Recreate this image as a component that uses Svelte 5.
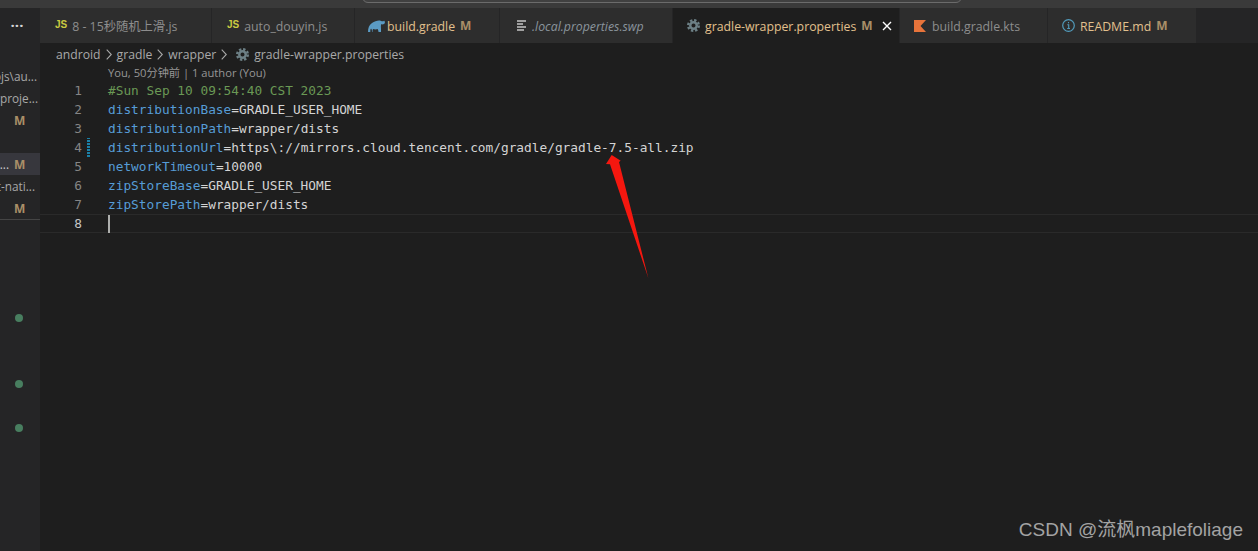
<script>
  const tabs = [
    { name: "8 - 15秒随机上滑.js", icon: "js", width: 172 },
    { name: "auto_douyin.js", icon: "js", width: 143 },
    { name: "build.gradle", icon: "gradle", width: 145, mod: true },
    { name: ".local.properties.swp", icon: "lines", width: 173, italic: true },
    { name: "gradle-wrapper.properties", icon: "gear", width: 227, mod: true, active: true },
    { name: "build.gradle.kts", icon: "kotlin", width: 148 },
    { name: "README.md", icon: "info", width: 149, mod: true },
  ];

  const lines = [
    { comment: "#Sun Sep 10 09:54:40 CST 2023" },
    { key: "distributionBase", value: "GRADLE_USER_HOME" },
    { key: "distributionPath", value: "wrapper/dists" },
    { key: "distributionUrl", value: "https\\://mirrors.cloud.tencent.com/gradle/gradle-7.5-all.zip", changed: true },
    { key: "networkTimeout", value: "10000" },
    { key: "zipStoreBase", value: "GRADLE_USER_HOME" },
    { key: "zipStorePath", value: "wrapper/dists" },
    { current: true },
  ];

  const files = [
    { text: "ojs\\au...", shift: 13 },
    { text: "yproje...", shift: 14 },
    { mod: true },
    {},
    { text: "...", mod: true, selected: true },
    { text: "t-nati...", shift: 11 },
    { mod: true, last: true },
  ];
</script>

{#snippet gear(size, color)}
  <svg class="icon" width={size} height={size} viewBox="0 0 16 16">
    <circle cx="8" cy="8" r="4" fill="none" stroke={color} stroke-width="3" />
    <circle cx="8" cy="8" r="6.500" fill="none" stroke={color} stroke-width="3" stroke-dasharray="2.900 2.200" />
  </svg>
{/snippet}

{#snippet chevron()}
  <svg class="icon" width="6" height="11" viewBox="0 0 6 11">
    <path d="M.7.7l4.600 4.800-4.600 4.800" fill="none" stroke="#a9a9a9" stroke-width="1.100" />
  </svg>
{/snippet}

<div class="window">
  <div class="titlebar"><div class="search"></div></div>
  <div class="main">
    <aside class="sidebar">
      <div class="more">···</div>
      <div class="rows">
        {#each files as f}
          <div class="row" class:selected={f.selected} class:last={f.last}>
            {#if f.text}<span class="row-text" style="margin-right: {-(f.shift ?? 0)}px">{f.text}</span>{/if}
            {#if f.mod}<span class="row-mod">M</span>{/if}
          </div>
        {/each}
      </div>
      <div class="dots">
        <span class="dot"></span>
        <span class="dot gap1"></span>
        <span class="dot gap2"></span>
      </div>
    </aside>

    <section class="content">
      <div class="tabs">
        {#each tabs as t}
          <div class="tab" class:active={t.active} class:dim={!t.mod} style="width: {t.width}px">
            {#if t.icon === "js"}
              <span class="js">JS</span>
            {:else if t.icon === "gradle"}
              <svg class="icon elephant" width="19" height="14" viewBox="0 0 19 14">
                <path d="M1 13c0-4 1-7 4-9 3-2 7-3 9-2 2 .6 3 .3 3-.5 1 1 1.500 2.500 0 3.500-1 .5-2 .5-2.500 0-1 1-.5 3-.5 5 0 1 0 2 0 3h-2.500c0-1-.5-2.500-1-3-1 .5-3 .5-4.500 0-.5 1-.5 2-.5 3H5c0-1 0-2-.5-3C3.500 9 3.300 11 3.300 13z" fill="#5b9bc4" />
              </svg>
            {:else if t.icon === "lines"}
              <svg class="icon doc" width="10" height="11" viewBox="0 0 10 11">
                <path d="M0 1h9M0 4h6M0 7h9M0 10h7" stroke="#c5c5c5" stroke-width="1.500" />
              </svg>
            {:else if t.icon === "gear"}
              {@render gear(13, "#6d8086")}
            {:else if t.icon === "kotlin"}
              <svg class="icon kotlin" width="12" height="12" viewBox="0 0 12 12">
                <path d="M0 0h12L6.500 6 12 12H0z" fill="#e8743b" />
              </svg>
            {:else if t.icon === "info"}
              <svg class="icon" width="13" height="13" viewBox="0 0 13 13">
                <circle cx="6.500" cy="6.500" r="5.800" fill="none" stroke="#519aba" stroke-width="1.200" />
                <path d="M6.500 3v1.300M5.300 5.800h1.400v3.500M5.200 9.500h2.800" fill="none" stroke="#519aba" stroke-width="1.100" />
              </svg>
            {/if}
            <span class="tab-name" class:italic={t.italic}>{t.name}</span>
            {#if t.mod}<span class="tab-mod">M</span>{/if}
            {#if t.active}
              <svg class="close" width="10" height="10" viewBox="0 0 10 10">
                <path d="M1 1l8 8M9 1l-8 8" stroke="#fff" stroke-width="1.400" />
              </svg>
            {/if}
          </div>
        {/each}
        <div class="tabs-rest"></div>
      </div>

      <div class="crumbs">
        <span>android</span>{@render chevron()}
        <span>gradle</span>{@render chevron()}
        <span>wrapper</span>{@render chevron()}
        <span class="crumb-gear">{@render gear(13, "#6d8086")}</span>
        <span>gradle-wrapper.properties</span>
      </div>

      <div class="lens">You, 50分钟前 | 1 author (You)</div>

      <div class="code">
        {#each lines as line, i}
          <div class="line" class:current={line.current}>
            <span class="num">{i + 1}</span>
            <span class="gutter" class:changed={line.changed}></span>
            <span class="src">
              {#if line.comment}
                <span class="comment">{line.comment}</span>
              {:else if line.key}
                <span class="key">{line.key}</span>=<span class="val">{line.value}</span>
              {:else}
                <span class="cursor"></span>
              {/if}
            </span>
          </div>
        {/each}
      </div>
    </section>
  </div>

  <svg class="arrow" width="50" height="130" viewBox="0 0 50 130">
    <path d="M11.700 0L6 9l4 .3L48.300 123 19 7l1.700-1.300z" fill="#f5170f" />
  </svg>
  <div class="watermark">CSDN @流枫maplefoliage</div>
</div>

<style>
  :global(body) {
    margin: 0;
    background: #1e1e1e;
  }

  .window {
    position: relative;
    width: 1258px;
    height: 551px;
    overflow: hidden;
    font-family: "Open Sans", "Noto Sans CJK SC", sans-serif;
    display: flex;
    flex-direction: column;
  }

  .titlebar {
    height: 8px;
    flex: none;
    background: #3a3a3a;
    overflow: hidden;
  }

  .search {
    margin: -20px 0 0 362px;
    width: 600px;
    height: 23px;
    box-sizing: border-box;
    border: 1px solid #6b6b6b;
    border-radius: 6px;
    background: #404040;
  }

  .main {
    flex: 1;
    display: flex;
    min-height: 0;
  }

  .sidebar {
    width: 40px;
    flex: none;
    background: #252526;
    overflow: hidden;
  }

  .more {
    height: 35px;
    line-height: 34px;
    text-align: center;
    color: #d4d4d4;
    font-size: 15px;
    font-weight: 700;
    margin-left: -6px;
  }

  .rows {
    padding-top: 22px;
  }

  .row {
    height: 22px;
    display: flex;
    align-items: center;
    justify-content: flex-end;
    gap: 5px;
    padding-right: 16px;
    white-space: nowrap;
    font-size: 11.800px;
    color: #a8a8a8;
    box-sizing: border-box;
  }

  .row.selected {
    background: #37373d;
    color: #ccc;
  }

  .row.last {
    height: 23px;
    border-bottom: 1px solid #454545;
  }

  .row-text {
    flex: none;
  }

  .row-mod {
    flex: none;
    color: #a98f68;
    font-weight: 700;
    font-size: 12px;
    width: 10px;
    text-align: center;
  }

  .dots {
    padding-top: 94px;
    display: flex;
    flex-direction: column;
    align-items: center;
    margin-left: -2px;
  }

  .dot {
    width: 8px;
    height: 8px;
    border-radius: 50%;
    background: #487e5f;
  }

  .gap1 {
    margin-top: 58px;
  }

  .gap2 {
    margin-top: 36px;
  }

  .content {
    flex: 1;
    min-width: 0;
    background: #1e1e1e;
  }

  .tabs {
    display: flex;
    height: 35px;
    background: #252526;
  }

  .tab {
    flex: none;
    box-sizing: border-box;
    display: flex;
    align-items: center;
    padding-left: 14px;
    background: #2d2d2d;
    border-right: 1px solid #252526;
    font-size: 12.300px;
    color: #e2c08d;
    white-space: nowrap;
  }

  .tab.dim {
    color: #8d8d8d;
  }

  .tab.active {
    background: #1e1e1e;
  }

  .icon {
    flex: none;
  }

  .elephant {
    margin-left: -2px;
    margin-right: -4px;
  }

  .doc {
    margin-left: 3px;
  }

  .kotlin {
    margin-right: 1px;
  }

  .js {
    font-family: "Liberation Sans", sans-serif;
    font-weight: 700;
    font-size: 10px;
    color: #cbcb41;
    margin: -3px 5px 0 1px;
  }

  .tab-name {
    margin: 1px 0 0 5px;
  }

  .js + .tab-name {
    margin-left: 0;
  }

  .tab-name.italic {
    font-style: italic;
    color: #8a949c;
  }

  .tab-mod {
    margin-left: 5px;
    font-weight: 700;
    font-size: 12px;
    color: #a98f68;
  }

  .close {
    margin-left: 9px;
  }

  .tabs-rest {
    flex: 1;
  }

  .crumbs {
    height: 22px;
    display: flex;
    align-items: center;
    gap: 5px;
    padding-left: 16px;
    font-size: 12.200px;
    color: #a9a9a9;
  }

  .crumb-gear {
    display: flex;
    margin-left: 4px;
  }

  .lens {
    height: 16px;
    line-height: 16px;
    padding-left: 68px;
    font-size: 11.200px;
    color: #969696;
  }

  .code {
    font-family: "DejaVu Sans Mono", monospace;
    font-size: 12.800px;
    line-height: 19px;
    color: #d4d4d4;
  }

  .line {
    height: 19px;
    display: flex;
    white-space: pre;
    box-sizing: border-box;
  }

  .line.current {
    border-top: 1px solid #2a2a2a;
    border-bottom: 1px solid #2a2a2a;
    line-height: 17px;
  }

  .num {
    width: 42px;
    text-align: right;
    color: #858585;
    flex: none;
  }

  .current .num {
    color: #c6c6c6;
  }

  .gutter {
    width: 3px;
    margin-left: 5px;
    margin-right: 18px;
    flex: none;
  }

  .gutter.changed {
    background: repeating-linear-gradient(0deg, #1b81a8 0 1.500px, #1e1e1e 1.500px 3px);
  }

  .comment {
    color: #6a9955;
  }

  .key {
    color: #569cd6;
  }

  .val {
    color: #d4d4d4;
  }

  .cursor {
    display: inline-block;
    width: 2px;
    height: 18px;
    background: #aeafad;
    vertical-align: top;
  }

  .arrow {
    position: absolute;
    left: 600px;
    top: 155px;
  }

  .watermark {
    position: absolute;
    right: 15px;
    top: 518px;
    font-family: "Liberation Sans", "Noto Sans CJK SC", sans-serif;
    font-size: 19px;
    line-height: 24px;
    color: #a3a3a3;
  }
</style>
